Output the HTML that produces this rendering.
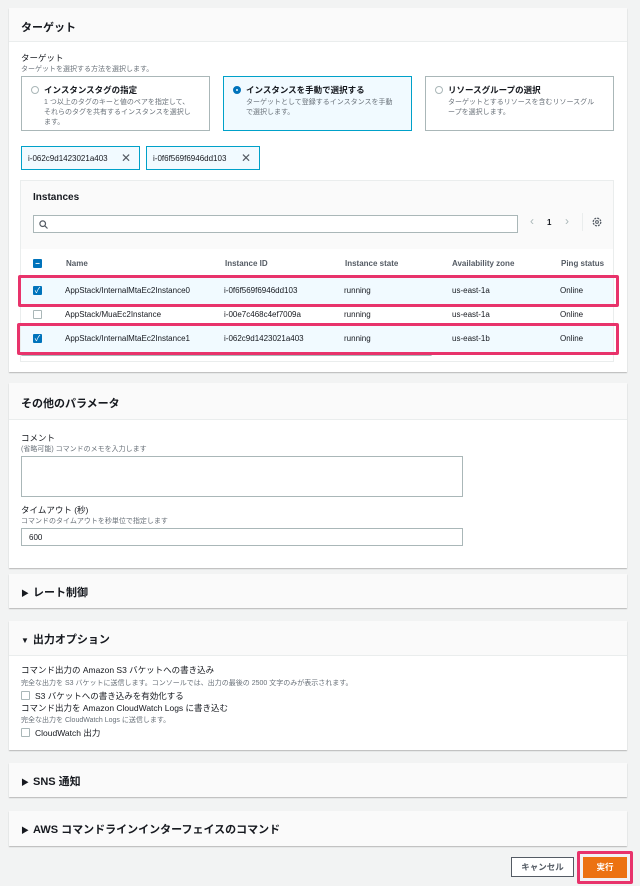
<!DOCTYPE html>
<html><head><meta charset="utf-8"><style>
*{box-sizing:border-box;margin:0;padding:0}
body{width:640px;height:886px;background:#f2f3f3;font-family:"Liberation Sans","Noto Sans CJK JP",sans-serif;color:#16191f;position:relative;overflow:hidden;font-size:9px}
.a{position:absolute}
.panel{position:absolute;left:9px;width:618px;background:#fff;box-shadow:0 1px 1px rgba(0,0,0,.25)}
.ph{position:absolute;left:0;top:0;width:100%;background:#fafafa;border-bottom:1px solid #eaeded}
.ht{position:absolute;left:12px;font-weight:bold;font-size:11px}
.sub{color:#687078;font-size:7px}
.card{position:absolute;top:76px;height:55px;width:189px;border:1px solid #aab7b8;background:#fff;padding:7px 0 0 22px;font-size:8.5px;font-weight:bold}
.card .d{font-weight:normal;color:#687078;font-size:7px;line-height:10px;margin-top:2px}
.rad{position:absolute;left:9px;top:9px;width:8px;height:8px;border:1px solid #aab7b8;border-radius:50%}
.tok{position:absolute;top:146px;height:24px;border:1px solid #00a1c9;background:#f1faff;font-size:8px;padding:7px 0 0 6px}
.tok span{position:absolute;right:8px;top:4px;font-size:12px;color:#545b64}
.cb{position:absolute;width:9px;height:9px;border:1px solid #aab7b8;border-radius:1px;background:#fff}
.cbc{background:#0073bb;border-color:#0073bb;color:#fff;font-size:8px;line-height:8px;text-align:center}
.row{position:absolute;left:20px;width:594px;font-size:8px}
.row div{position:absolute;top:0}
.pink{position:absolute;border:3px solid #e8336b;border-radius:2px}
.inp{position:absolute;border:1px solid #aab7b8;background:#fff}
.tri{font-size:8px;margin-right:4px}
</style></head><body>

<div class="panel" style="top:8px;height:364px">
 <div class="ph" style="height:34px"></div>
 <div class="ht" style="top:11px">ターゲット</div>
</div>
<div class="a" style="left:21px;top:52px;font-size:8.5px">ターゲット</div>
<div class="a sub" style="left:21px;top:64px">ターゲットを選択する方法を選択します。</div>
<div class="card" style="left:21px"><div class="rad"></div>インスタンスタグの指定<div class="d">1 つ以上のタグのキーと値のペアを指定して、<br>それらのタグを共有するインスタンスを選択し<br>ます。</div></div>
<div class="card" style="left:223px;background:#f1faff;border-color:#00a1c9"><div class="rad" style="border:3px solid #0073bb"></div>インスタンスを手動で選択する<div class="d">ターゲットとして登録するインスタンスを手動<br>で選択します。</div></div>
<div class="card" style="left:425px"><div class="rad"></div>リソースグループの選択<div class="d">ターゲットとするリソースを含むリソースグル<br>ープを選択します。</div></div>
<div class="tok" style="left:21px;width:119px">i-062c9d1423021a403<span>✕</span></div>
<div class="tok" style="left:146px;width:114px">i-0f6f569f6946dd103<span>✕</span></div>

<div class="a" style="left:20px;top:180px;width:594px;height:182px;border:1px solid #eaeded;background:#fff"></div>
<div class="a" style="left:21px;top:181px;width:592px;height:68px;background:#fafafa"></div>
<div class="a" style="left:33px;top:192px;font-weight:bold;font-size:10px">Instances</div>
<div class="inp" style="left:33px;top:215px;width:485px;height:18px">
 <svg style="position:absolute;left:5px;top:4px" width="9" height="9" viewBox="0 0 9 9"><circle cx="3.7" cy="3.7" r="2.8" fill="none" stroke="#545b64" stroke-width="1.2"/><path d="M5.8 5.8L8.5 8.5" stroke="#545b64" stroke-width="1.2"/></svg>
</div>
<div class="a" style="left:530px;top:214px;font-size:12px;color:#aab7b8">‹</div>
<div class="a" style="left:547px;top:218px;font-size:8px;font-weight:bold">1</div>
<div class="a" style="left:565px;top:214px;font-size:12px;color:#aab7b8">›</div>
<div class="a" style="left:582px;top:213px;width:1px;height:18px;background:#eaeded"></div>
<svg class="a" style="left:592px;top:217px" width="10" height="10" viewBox="0 0 10 10"><circle cx="5" cy="5" r="3.8" fill="none" stroke="#545b64" stroke-width="1.3" stroke-dasharray="2 1"/><circle cx="5" cy="5" r="1.4" fill="none" stroke="#545b64" stroke-width="1"/></svg>

<div class="row" style="top:259px;font-weight:bold;color:#545b64">
 <div class="cb cbc" style="left:13px;top:0;">−</div>
 <div style="left:46px">Name</div><div style="left:205px">Instance ID</div><div style="left:325px">Instance state</div><div style="left:432px">Availability zone</div><div style="left:541px">Ping status</div>
</div>
<div class="a" style="left:21px;top:277px;width:592px;height:28px;background:#f1faff;border-top:1px solid #00a1c9;border-bottom:1px solid #00a1c9"></div>
<div class="a" style="left:21px;top:325px;width:592px;height:28px;background:#f1faff;border-top:1px solid #00a1c9;border-bottom:1px solid #00a1c9"></div>
<div class="row" style="top:286px"><div class="cb cbc" style="left:13px">✓</div><div style="left:45px">AppStack/InternalMtaEc2Instance0</div><div style="left:204px">i-0f6f569f6946dd103</div><div style="left:324px">running</div><div style="left:432px">us-east-1a</div><div style="left:540px">Online</div></div>
<div class="row" style="top:310px"><div class="cb" style="left:13px"></div><div style="left:45px">AppStack/MuaEc2Instance</div><div style="left:204px">i-00e7c468c4ef7009a</div><div style="left:324px">running</div><div style="left:432px">us-east-1a</div><div style="left:540px">Online</div></div>
<div class="row" style="top:334px"><div class="cb cbc" style="left:13px">✓</div><div style="left:45px">AppStack/InternalMtaEc2Instance1</div><div style="left:204px">i-062c9d1423021a403</div><div style="left:324px">running</div><div style="left:432px">us-east-1b</div><div style="left:540px">Online</div></div>
<div class="a" style="left:21px;top:353px;width:411px;height:3px;background:#aab7b8;border-radius:2px"></div>
<div class="pink" style="left:18px;top:275px;width:601px;height:32px"></div>
<div class="pink" style="left:17px;top:323px;width:602px;height:32px"></div>

<div class="panel" style="top:383px;height:185px">
 <div class="ph" style="height:37px"></div>
 <div class="ht" style="top:12px">その他のパラメータ</div>
</div>
<div class="a" style="left:21px;top:432px;font-size:8.5px">コメント</div>
<div class="a sub" style="left:21px;top:444px">(省略可能) コマンドのメモを入力します</div>
<div class="inp" style="left:21px;top:456px;width:442px;height:41px"></div>
<div class="a" style="left:21px;top:504px;font-size:8.5px">タイムアウト (秒)</div>
<div class="a sub" style="left:21px;top:516px">コマンドのタイムアウトを秒単位で指定します</div>
<div class="inp" style="left:21px;top:528px;width:442px;height:18px;font-size:8px;padding:4px 0 0 7px">600</div>

<div class="panel" style="top:574px;height:34px;background:#fafafa"><div class="ht" style="top:10px"><span class="tri">▶</span>レート制御</div></div>

<div class="panel" style="top:621px;height:129px">
 <div class="ph" style="height:35px"></div>
 <div class="ht" style="top:10px"><span class="tri">▼</span>出力オプション</div>
</div>
<div class="a" style="left:21px;top:664px;font-size:8.5px">コマンド出力の Amazon S3 バケットへの書き込み</div>
<div class="a sub" style="left:21px;top:678px">完全な出力を S3 バケットに送信します。コンソールでは、出力の最後の 2500 文字のみが表示されます。</div>
<div class="cb" style="left:21px;top:691px"></div><div class="a" style="left:35px;top:690px;font-size:8.5px">S3 バケットへの書き込みを有効化する</div>
<div class="a" style="left:21px;top:702px;font-size:8.5px">コマンド出力を Amazon CloudWatch Logs に書き込む</div>
<div class="a sub" style="left:21px;top:715px">完全な出力を CloudWatch Logs に送信します。</div>
<div class="cb" style="left:21px;top:728px"></div><div class="a" style="left:35px;top:727px;font-size:8.5px">CloudWatch 出力</div>

<div class="panel" style="top:763px;height:34px;background:#fafafa"><div class="ht" style="top:10px"><span class="tri">▶</span>SNS 通知</div></div>
<div class="panel" style="top:811px;height:35px;background:#fafafa"><div class="ht" style="top:10px"><span class="tri">▶</span>AWS コマンドラインインターフェイスのコマンド</div></div>

<div class="a" style="left:511px;top:857px;width:63px;height:20px;border:1px solid #545b64;background:#fff;font-size:8.5px;font-weight:bold;color:#545b64;text-align:center;line-height:18px">キャンセル</div>
<div class="a" style="left:577px;top:851px;width:56px;height:33px;border:3px solid #e8336b;border-radius:2px"></div>
<div class="a" style="left:583px;top:857px;width:44px;height:21px;background:#ec7211;color:#fff;font-size:8.5px;font-weight:bold;text-align:center;line-height:21px">実行</div>
</body></html>
